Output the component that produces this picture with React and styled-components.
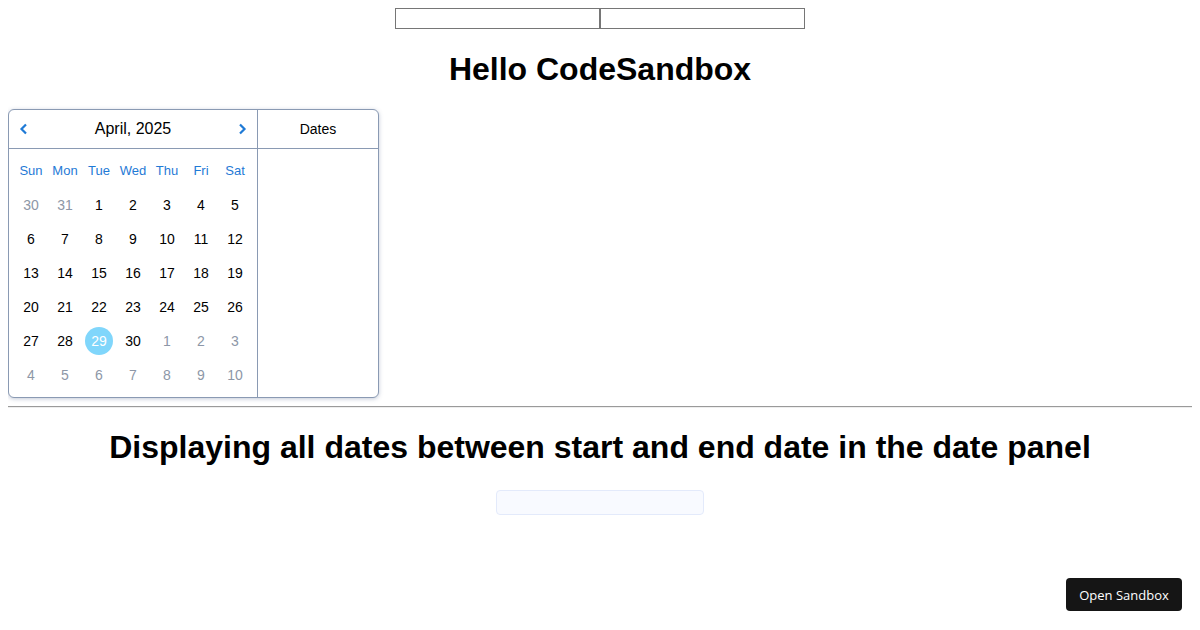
import React from "react"
import styled, { createGlobalStyle } from "styled-components"

const GlobalStyle = createGlobalStyle`
  body {
    margin: 8px;
    font-family: "Liberation Sans", Arial, sans-serif;
    color: #000;
    background: #fff;
  }
`

const WEEKDAYS = ["Sun", "Mon", "Tue", "Wed", "Thu", "Fri", "Sat"]

// April 2025 grid, muted = outside the month
const DAYS = [
  [30, true], [31, true], [1], [2], [3], [4], [5],
  [6], [7], [8], [9], [10], [11], [12],
  [13], [14], [15], [16], [17], [18], [19],
  [20], [21], [22], [23], [24], [25], [26],
  [27], [28], [29], [30], [1, true], [2, true], [3, true],
  [4, true], [5, true], [6, true], [7, true], [8, true], [9, true], [10, true],
]

const Page = styled.div`
  text-align: center;
`

const InputRow = styled.div`
  display: flex;
  justify-content: center;
  height: 22px;
`

const DateInput = styled.input`
  box-sizing: border-box;
  width: 205px;
  height: 21px;
  margin: 0;
  padding: 1px 2px;
  border: 1px solid #767676;
  border-radius: 0;
  font: 13px "Liberation Sans", Arial, sans-serif;
`

const Title = styled.h1`
  font-size: 32px;
  font-weight: bold;
  line-height: 37px;
  margin: 21px 0;
`

const Picker = styled.div`
  display: flex;
  width: 371px;
  height: 289px;
  box-sizing: border-box;
  border: 1px solid #8a9ab3;
  border-radius: 6px;
  box-shadow: 0 1px 4px rgba(80, 100, 140, 0.35);
  background: #fff;
  text-align: left;
  overflow: hidden;
`

const CalendarPane = styled.div`
  width: 248px;
  border-right: 1px solid #8a9ab3;
  display: flex;
  flex-direction: column;
`

const PaneHeader = styled.div`
  height: 38px;
  border-bottom: 1px solid #8a9ab3;
  display: flex;
  align-items: center;
  justify-content: ${(p) => (p.center ? "center" : "space-between")};
  padding: 0 ${(p) => (p.center ? 0 : 8)}px;
  font-size: ${(p) => (p.center ? 14 : 16)}px;
`

const NavButton = styled.button`
  width: 14px;
  height: 20px;
  padding: 0;
  border: 0;
  background: none;
  display: flex;
  align-items: center;
  justify-content: center;
  cursor: pointer;
`

const Grid = styled.div`
  display: grid;
  grid-template-columns: repeat(7, 34px);
  grid-auto-rows: 34px;
  padding: 5px 0 0 5px;
`

const Weekday = styled.div`
  display: flex;
  align-items: center;
  justify-content: center;
  padding-bottom: 2px;
  font-size: 13px;
  color: #1f7ad6;
`

const Day = styled.div`
  display: flex;
  align-items: center;
  justify-content: center;
  font-size: 14px;
  color: ${(p) => (p.selected ? "#fff" : p.muted ? "#8d97a7" : "#000")};

  span {
    width: 28px;
    height: 28px;
    border-radius: 50%;
    display: flex;
    align-items: center;
    justify-content: center;
    background: ${(p) => (p.selected ? "#80d6fb" : "transparent")};
  }
`

const DatesPane = styled.div`
  flex: 1;
  display: flex;
  flex-direction: column;
`

const Rule = styled.hr`
  margin: 8px 0;
  border: 0;
  border-top: 1px solid #9a9a9a;
  border-bottom: 1px solid #eee;
`

const ResultBox = styled.div`
  width: 208px;
  height: 25px;
  box-sizing: border-box;
  margin: 24px auto 0;
  border: 1px solid #e3eafb;
  border-radius: 4px;
  background: #f8faff;
`

const SandboxButton = styled.a`
  position: fixed;
  right: 18px;
  bottom: 19px;
  width: 116px;
  height: 33px;
  box-sizing: border-box;
  display: flex;
  align-items: center;
  justify-content: center;
  background: #151515;
  color: #fff;
  border-radius: 4px;
  font: 500 13px "Open Sans", sans-serif;
  text-decoration: none;
`

const Chevron = ({ dir }) => (
  <svg width="10" height="12" viewBox="0 0 10 12">
    <path
      d={dir === "left" ? "M7 1.5 L2.5 6 L7 10.5" : "M3 1.5 L7.5 6 L3 10.5"}
      fill="none"
      stroke="#1f7ad6"
      strokeWidth="2.2"
    />
  </svg>
)

const App = () => (
  <>
    <GlobalStyle />
    <Page>
      <InputRow>
        <DateInput type="text" />
        <DateInput type="text" />
      </InputRow>
      <Title>Hello CodeSandbox</Title>

      <Picker>
        <CalendarPane>
          <PaneHeader>
            <NavButton aria-label="Previous month">
              <Chevron dir="left" />
            </NavButton>
            April, 2025
            <NavButton aria-label="Next month">
              <Chevron dir="right" />
            </NavButton>
          </PaneHeader>
          <Grid>
            {WEEKDAYS.map((d) => (
              <Weekday key={d}>{d}</Weekday>
            ))}
            {DAYS.map(([n, muted], i) => (
              <Day key={i} muted={muted} selected={i === 30}>
                <span>{n}</span>
              </Day>
            ))}
          </Grid>
        </CalendarPane>
        <DatesPane>
          <PaneHeader center>Dates</PaneHeader>
        </DatesPane>
      </Picker>

      <Rule />
      <Title>Displaying all dates between start and end date in the date panel</Title>
      <ResultBox />
    </Page>
    <SandboxButton href="#">Open Sandbox</SandboxButton>
  </>
)

export default App
